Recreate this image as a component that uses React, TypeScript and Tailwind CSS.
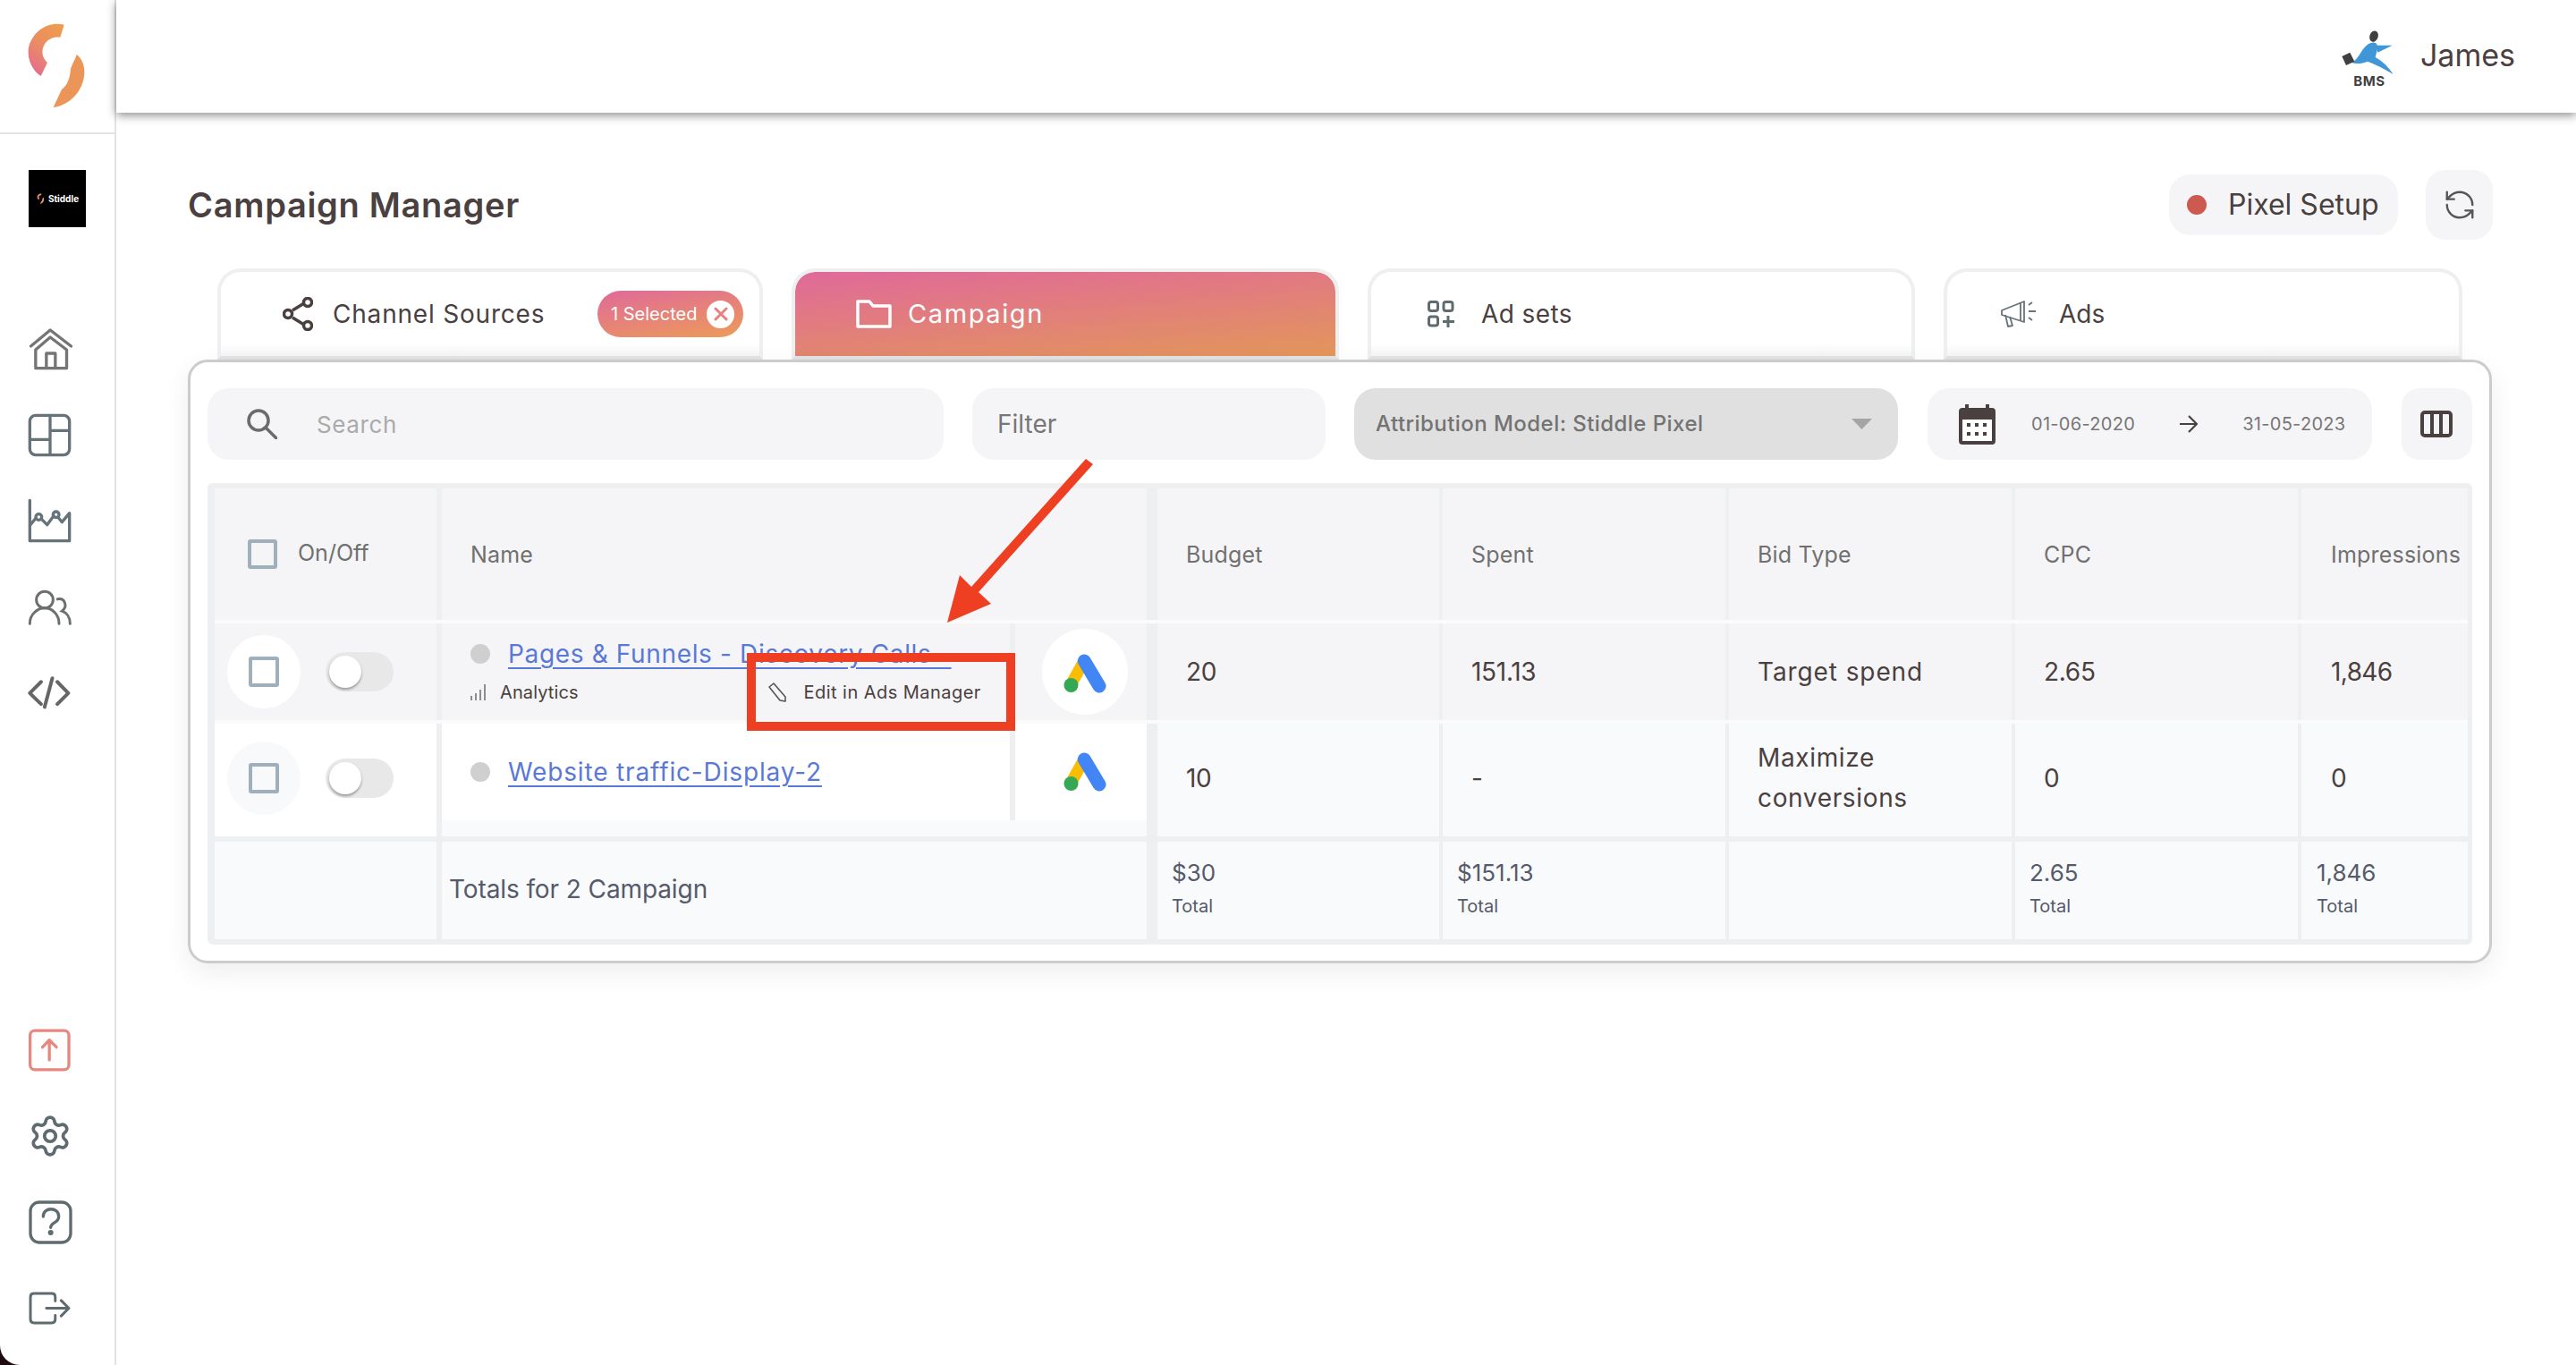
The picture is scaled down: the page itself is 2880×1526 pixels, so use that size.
import React from 'react';
import { Settings, RefreshCcw } from 'lucide-react';

const tableCols = 'grid grid-cols-[254px_800px_319px_320px_320px_320px_186px]';

function StiddleMark({ className }: { className: string }) {
  return (
    <svg viewBox="0 0 270 345" className={className}>
      <defs>
        <linearGradient id="logoTop" x1="0.2" y1="1" x2="0.7" y2="0">
          <stop offset="0" stopColor="#e56b8f" />
          <stop offset="0.55" stopColor="#ea8d62" />
          <stop offset="1" stopColor="#ee9b50" />
        </linearGradient>
      </defs>
      <path fill="url(#logoTop)" d="M158 38C110 25 50 55 38 120C35 160 55 195 80 210L102 165C85 150 78 125 95 100C108 82 130 78 145 80Z" />
      <path fill="#ec9558" d="M200 138C235 165 235 225 200 270C180 295 150 312 122 315L150 255C170 240 178 215 180 185C185 170 195 155 200 138Z" />
    </svg>
  );
}

function HomeIcon() {
  return (
    <svg viewBox="30 30 155 150" className="w-[52px] h-[50px]" fill="none" stroke="#757575" strokeWidth="10" strokeLinejoin="round" strokeLinecap="round">
      <path d="M40 96L105 42L175 96" />
      <path d="M56 108V170H160V108L105 66Z" />
      <path d="M92 168V120H122V168" />
    </svg>
  );
}

function GridIcon() {
  return (
    <svg viewBox="35 320 147 147" className="w-[49px] h-[49px]" fill="none" stroke="#66737a" strokeWidth="10">
      <rect x="42" y="327" width="133" height="133" rx="20" />
      <path d="M110 327V460M110 378H175M42 408H110" />
    </svg>
  );
}

function ChartIcon() {
  return (
    <svg viewBox="35 605 147 150" className="w-[49px] h-[50px]" fill="none" stroke="#66737a" strokeWidth="10" strokeLinejoin="round" strokeLinecap="round">
      <path d="M42 612V748H175V655L150 685L136 668M122 664L100 694L82 676M62 672L42 696" />
      <circle cx="72" cy="668" r="10" />
      <circle cx="130" cy="660" r="10" />
    </svg>
  );
}

function UsersIcon() {
  return (
    <svg viewBox="35 905 147 122" className="w-[49px] h-[41px]" fill="none" stroke="#6b6f70" strokeWidth="9" strokeLinecap="round">
      <circle cx="92" cy="942" r="28" />
      <path d="M42 1022C42 990 68 970 92 970C116 970 140 990 140 1022" />
      <path d="M135 940C160 935 170 965 150 980C165 985 177 1000 177 1022" />
    </svg>
  );
}

function CodeIcon() {
  return (
    <svg viewBox="35 1202 145 110" className="w-[48px] h-[37px]" fill="none" stroke="#666" strokeWidth="12" strokeLinecap="round" strokeLinejoin="round">
      <path d="M80 1220L42 1258L80 1295M135 1220L172 1258L135 1295M118 1208L92 1305" />
    </svg>
  );
}

function UploadIcon() {
  return (
    <svg viewBox="98 150 142 144" className="w-[47px] h-[48px]" fill="none" stroke="#e8877f" strokeWidth="10" strokeLinecap="round" strokeLinejoin="round">
      <rect x="103" y="156" width="131" height="132" rx="16" />
      <path d="M168 255V190M145 212L168 188L192 212" />
    </svg>
  );
}

function QuestionIcon() {
  return (
    <svg viewBox="94 724 147 147" className="w-[49px] h-[49px]" fill="none" stroke="#5f6b6e" strokeWidth="10" strokeLinecap="round">
      <rect x="100" y="730" width="135" height="135" rx="30" />
      <path d="M143 778C143 745 195 745 195 778C195 802 168 795 168 815" />
      <circle cx="168" cy="832" r="4" fill="#5f6b6e" />
    </svg>
  );
}

function LogoutIcon() {
  return (
    <svg viewBox="98 1030 142 112" className="w-[47px] h-[37px]" fill="none" stroke="#5f6b6e" strokeWidth="9" strokeLinecap="round" strokeLinejoin="round">
      <path d="M188 1062V1048Q188 1036 176 1036H116Q104 1036 104 1048V1124Q104 1136 116 1136H176Q188 1136 188 1124V1110" />
      <path d="M158 1086H232M208 1060L234 1086L208 1112" />
    </svg>
  );
}

function AdsLogo() {
  return (
    <svg viewBox="0 0 48 44" className="w-[48px] h-[44px]" fill="none" strokeLinecap="round">
      <path d="M8 35L23 8" stroke="#fbbc04" strokeWidth="13" />
      <path d="M23.3 8L40 36" stroke="#4285f4" strokeWidth="15" />
      <circle cx="8.5" cy="35" r="8" fill="#34a853" />
    </svg>
  );
}

function Checkbox({ small }: { small?: boolean }) {
  return <div className={small ? 'w-[33px] h-[33px] border-[4px] border-[#9fb0bc] rounded-[3px]' : 'w-[34px] h-[34px] border-[4px] border-[#9fb0bc] rounded-[3px]'} />;
}

function Toggle() {
  return (
    <div className="w-[76px] h-[44px] rounded-full bg-[#e8e8e8] flex items-center pl-[4px]">
      <div className="w-[36px] h-[36px] rounded-full bg-white shadow-[0_2px_3px_rgba(0,0,0,0.35)]" />
    </div>
  );
}

function HeaderCell({ label }: { label: string }) {
  return (
    <div className="bg-[#f5f5f7] border-r-[4px] border-[#eeeff1] pl-[32px] pt-[57px] text-[25px] tracking-[0.2px] leading-[34px] text-[#707070] whitespace-nowrap overflow-visible">
      {label}
    </div>
  );
}

function DataCell({ children, row }: { children: React.ReactNode; row: 1 | 2 }) {
  return (
    <div className={row === 1
      ? 'bg-[#f5f5f7] border-r-[4px] border-[#eeeff1] pl-[32px] flex items-center text-[28px] tracking-[-0.3px] leading-[45px] text-[#4a4040]'
      : 'bg-[#f9fafc] border-r-[4px] border-[#eeeff1] pl-[32px] pb-[4px] flex items-center text-[28px] tracking-[-0.3px] leading-[45px] text-[#4a4040]'}>
      <div>{children}</div>
    </div>
  );
}

function TotalCell({ value }: { value?: string }) {
  return (
    <div className="bg-[#f9fafc] border-r-[4px] border-[#eeeff1] pl-[16px] pt-[18px] text-[#555b6b]">
      {value && (
        <>
          <div className="text-[26px] leading-[34px]">{value}</div>
          <div className="text-[20px] leading-[30px] mt-[5px]">Total</div>
        </>
      )}
    </div>
  );
}

export default function App() {
  return (
    <div className="relative w-[2880px] h-[1526px] bg-[#1d0b10] overflow-hidden font-['Inter',sans-serif]">
      <div className="flex w-full h-full bg-white rounded-bl-[22px] overflow-hidden">
        {/* sidebar */}
        <aside className="w-[130px] shrink-0 border-r-2 border-[#e3e3e3] flex flex-col">
          <div className="h-[150px] border-b-2 border-[#e3e3e3] flex items-center justify-center pb-[4px]">
            <StiddleMark className="w-[90px] h-[115px]" />
          </div>
          <div className="mt-[40px] ml-[32px] w-[64px] h-[64px] bg-black flex items-center justify-center gap-[3px]">
            <StiddleMark className="w-[11px] h-[14px]" />
            <span className="text-[10px] font-bold text-white leading-none">Stiddle</span>
          </div>
          <nav className="mt-[88px] pl-[31px] flex flex-col">
            <div className="h-[96px] flex items-center"><HomeIcon /></div>
            <div className="h-[96px] flex items-center"><GridIcon /></div>
            <div className="h-[96px] flex items-center"><ChartIcon /></div>
            <div className="h-[96px] flex items-center"><UsersIcon /></div>
            <div className="h-[96px] flex items-center"><CodeIcon /></div>
          </nav>
          <div className="mt-auto mb-[16px] pl-[32px] flex flex-col">
            <div className="h-[96px] flex items-center"><UploadIcon /></div>
            <div className="h-[96px] flex items-center"><Settings size={50} strokeWidth={1.8} color="#5f6b6e" className="-ml-[1px]" /></div>
            <div className="h-[96px] flex items-center"><QuestionIcon /></div>
            <div className="h-[96px] flex items-center"><LogoutIcon /></div>
          </div>
        </aside>

        <main className="flex-1 min-w-0">
          <header className="h-[126px] bg-white shadow-[0_3px_10px_rgba(0,0,0,0.45)] flex items-center justify-end pr-[68px]">
            <div className="flex flex-col items-center mr-[15px] -ml-[2px] pr-[2px]">
              <svg viewBox="0 0 240 165" className="w-[80px] h-[55px]">
                <ellipse cx="135" cy="38" rx="14" ry="19" transform="rotate(20 135 38)" fill="#3f3f3f" />
                <path fill="#3f97d8" d="M60 125C88 116 92 72 125 60C140 54 152 64 146 84L140 108C165 122 185 142 200 165C170 146 140 132 114 122C95 130 75 132 60 125Z" />
                <path fill="#3f97d8" d="M142 68L197 68L148 92Z" />
                <path fill="#3f3f3f" d="M28 105L55 92L70 122L42 135Z" />
              </svg>
              <span className="text-[15px] font-bold leading-[16px] text-[#3f3f3f] tracking-[0.5px]">BMS</span>
            </div>
            <span className="text-[34px] text-[#4a4040] pb-[4px]">James</span>
          </header>

          <div className="pl-[80px] pr-[94px]">
            <div className="mt-[64px] h-[78px] flex items-center justify-between">
              <h1 className="text-[38px] tracking-[0.7px] font-semibold text-[#4a4040]">Campaign Manager</h1>
              <div className="flex items-center gap-[31px] -mr-[1px]">
                <div className="w-[256px] h-[68px] rounded-[24px] bg-[#f5f5f7] flex items-center pl-[20px]">
                  <div className="w-[22px] h-[22px] rounded-full bg-[#cc5a50]" />
                  <span className="ml-[24px] text-[32px] text-[#4a4040]">Pixel Setup</span>
                </div>
                <div className="w-[75px] h-[78px] rounded-[22px] bg-[#f5f5f7] flex items-center justify-center">
                  <RefreshCcw size={38} strokeWidth={1.5} color="#555" />
                </div>
              </div>
            </div>

            {/* tabs */}
            <div className="mt-[32px] pl-[33px] flex gap-[32px] h-[102px]">
              <div className="w-[610px] rounded-t-[26px] border-[4px] border-[#eeeff1] border-b-[#e2e3e6] bg-[linear-gradient(to_bottom,#ffffff_85%,#f5f5f6_100%)] flex items-center relative">
                <svg viewBox="0 0 34 38" className="ml-[69px] w-[34px] h-[38px]" fill="none" stroke="#4a4040" strokeWidth="3.5">
                  <path d="M11 15L24 7M11 23L24 31" />
                  <circle cx="6" cy="19" r="4.5" />
                  <circle cx="28" cy="6" r="4.5" />
                  <circle cx="28" cy="32" r="4.5" />
                </svg>
                <span className="ml-[22px] text-[28px] tracking-[0.8px] text-[#4a4040] whitespace-nowrap">Channel Sources</span>
                <div className="absolute left-[421px] top-[21px] w-[163px] h-[52px] rounded-full bg-[linear-gradient(170deg,#e0699a,#ec9c58)] flex items-center pl-[15px] text-[20px] text-white">
                  <span>1 Selected</span>
                  <span className="absolute right-[10px] w-[31px] h-[31px] rounded-full bg-white flex items-center justify-center">
                    <svg viewBox="0 0 16 16" className="w-[16px] h-[16px]" stroke="#e8807f" strokeWidth="3" strokeLinecap="round"><path d="M2 2L14 14M14 2L2 14" /></svg>
                  </span>
                </div>
              </div>
              <div className="w-[612px] rounded-t-[26px] border-[4px] border-[#eeeff1] border-b-[#e2e3e6] bg-clip-padding bg-[linear-gradient(175deg,#e0699a,#e3965a)] flex items-center">
                <svg viewBox="0 0 40 32" className="ml-[68px] w-[40px] h-[32px]" fill="none" stroke="#fff" strokeWidth="3.5" strokeLinejoin="round">
                  <path d="M2 2H15L19 7H38V30H2Z" />
                </svg>
                <span className="ml-[18px] text-[29px] tracking-[1.6px] text-white">Campaign</span>
              </div>
              <div className="w-[612px] rounded-t-[26px] border-[4px] border-[#eeeff1] border-b-[#e2e3e6] bg-[linear-gradient(to_bottom,#ffffff_85%,#f5f5f6_100%)] flex items-center">
                <svg viewBox="0 0 30 30" className="ml-[63px] w-[30px] h-[30px]" fill="none" stroke="#5f6b6e" strokeWidth="3">
                  <rect x="1.5" y="1.5" width="10" height="10" rx="2.5" />
                  <rect x="18" y="1.5" width="10" height="10" rx="2.5" />
                  <rect x="1.5" y="18" width="10" height="10" rx="2.5" />
                  <path d="M23 17V30M17 23.5H30" />
                </svg>
                <span className="ml-[30px] text-[28px] tracking-[0.4px] text-[#4a4040]">Ad sets</span>
              </div>
              <div className="w-[580px] rounded-t-[26px] border-[4px] border-[#eeeff1] border-b-[#e2e3e6] bg-[linear-gradient(to_bottom,#ffffff_85%,#f5f5f6_100%)] flex items-center">
                <svg viewBox="0 0 40 30" className="ml-[60px] w-[40px] h-[30px]" fill="none" stroke="#66737a" strokeWidth="1.8" strokeLinejoin="round">
                  <path d="M1 11L26 1V24L1 16Z" />
                  <path d="M22 3V22M5 16L8 29L13 28L10 18" />
                  <path d="M31 5L35 2M31 12H39M31 19L35 22" />
                </svg>
                <span className="ml-[25px] text-[28px] text-[#4a4040]">Ads</span>
              </div>
            </div>

            {/* card */}
            <section className="h-[675px] rounded-[22px] border-[3px] border-[#cccccc] bg-white shadow-[0_10px_30px_rgba(0,0,0,0.07)] pt-[29px] pl-[19px] pr-[19px] relative">
              <div className="flex h-[80px]">
                <div className="w-[823px] rounded-[24px] bg-[#f5f5f7] flex items-center pl-[44px]">
                  <svg viewBox="0 0 34 34" className="w-[34px] h-[34px]" fill="none" stroke="#6b6b6b" strokeWidth="3.5" strokeLinecap="round">
                    <circle cx="13" cy="13" r="11" />
                    <path d="M21 21L33 33" />
                  </svg>
                  <span className="ml-[44px] text-[26px] tracking-[0.6px] text-[#aaaaaa]">Search</span>
                </div>
                <div className="ml-[32px] w-[395px] rounded-[24px] bg-[#f5f5f7] flex items-center pl-[28px] text-[28px] text-[#777777]">Filter</div>
                <div className="ml-[32px] w-[608px] rounded-[24px] bg-[#e0e0e0] flex items-center justify-between pl-[24px] pr-[29px]">
                  <span className="text-[24px] tracking-[0.45px] font-medium text-[#737373]">Attribution Model: Stiddle Pixel</span>
                  <svg viewBox="0 0 23 12" className="w-[23px] h-[12px]"><path d="M0 0H23L11.5 12Z" fill="#a5a5a5" /></svg>
                </div>
                <div className="ml-[33px] w-[497px] rounded-[24px] bg-[#f5f5f7] flex items-center pl-[35px] text-[20px] tracking-[0.3px] text-[#777777]">
                  <svg viewBox="0 0 41 45" className="w-[41px] h-[45px]">
                    <path d="M7 0H11V4H30V0H34V4H37Q41 4 41 8V41Q41 45 37 45H4Q0 45 0 41V8Q0 4 4 4H7Z" fill="#4a4040" />
                    <rect x="4" y="17" width="33" height="24" fill="#fff" />
                    <path d="M9 21h4v4H9zM18 21h4v4h-4zM27 21h4v4h-4zM9 31h4v4H9zM18 31h4v4h-4zM27 31h4v4h-4z" fill="#4a4040" />
                  </svg>
                  <span className="ml-[40px]">01-06-2020</span>
                  <svg viewBox="0 0 20 22" className="ml-[50px] w-[20px] h-[22px]" fill="none" stroke="#4a4040" strokeWidth="2.2"><path d="M0 11H19M10 2L19 11L10 20" /></svg>
                  <span className="ml-[50px]">31-05-2023</span>
                </div>
                <div className="ml-[33px] w-[79px] rounded-[20px] bg-[#f5f5f7] flex items-center justify-center pr-[2px]">
                  <svg viewBox="0 0 36 30" className="w-[36px] h-[30px]" fill="none" stroke="#4a4040" strokeWidth="4">
                    <rect x="2" y="2" width="32" height="26" rx="3" />
                    <path d="M13 2V28M23 2V28" />
                  </svg>
                </div>
              </div>

              {/* table */}
              <div className="mt-[26px] h-[516px] w-[2532px] bg-[#eeeff1] rounded-[6px] p-[6px] pl-[8px] pr-[5px]">
                <div className="bg-[#fbfbfc] flex flex-col gap-[4px] h-[389px]">
                  <div className={`${tableCols} h-[147px]`}>
                    <div className="bg-[#f5f5f7] border-r-[6px] border-[#eeeff1] flex items-center pl-[37px]">
                      <Checkbox small />
                      <span className="ml-[23px] text-[25px] text-[#707070] pb-[2px]">On/Off</span>
                    </div>
                    <div className="bg-[#f5f5f7] border-r-[12px] border-[#eeeff1] pl-[32px] pt-[57px] text-[25px] tracking-[0.2px] leading-[34px] text-[#707070]">Name</div>
                    <HeaderCell label="Budget" />
                    <HeaderCell label="Spent" />
                    <HeaderCell label="Bid Type" />
                    <HeaderCell label="CPC" />
                    <div className="bg-[#f5f5f7] pl-[33px] pt-[57px] text-[25px] tracking-[0.2px] leading-[34px] text-[#707070] whitespace-nowrap">Impressions</div>
                  </div>

                  <div className={`${tableCols} h-[108px]`}>
                    <div className="bg-[#f5f5f7] border-r-[6px] border-[#eeeff1] flex items-center pl-[14px]">
                      <div className="w-[82px] h-[82px] rounded-full bg-white flex items-center justify-center">
                        <Checkbox />
                      </div>
                      <div className="ml-[28px]"><Toggle /></div>
                    </div>
                    <div className="border-r-[12px] border-[#eeeff1] flex">
                      <div className="w-[641px] bg-[#f5f5f7] pl-[32px] pt-[16px] border-r-[6px] border-[#eeeff1]">
                        <div className="flex items-center h-[36px]">
                          <div className="w-[22px] h-[22px] rounded-full shrink-0 bg-[#cfcfcf]" />
                          <a className="ml-[20px] text-[28px] tracking-[0.65px] text-[#5a78d8] underline underline-offset-[5px] whitespace-nowrap">Pages &amp; Funnels - Discovery Calls -</a>
                          <span className="ml-[6px] text-[22px] text-[#5a78d8]">...</span>
                        </div>
                        <div className="flex items-center h-[26px] mt-[12px] text-[20px] text-[#4a4040]">
                          <svg viewBox="0 0 18 18" className="w-[18px] h-[18px]" fill="#8d8d8d">
                            <path d="M0 13h2v5H0zM5 10h2v8H5zM10 6h2v12h-2zM15 0h2v18h-2z" />
                          </svg>
                          <span className="ml-[15px] tracking-[0.1px]">Analytics</span>
                          <svg viewBox="0 0 22 24" className="ml-[211px] w-[22px] h-[24px]" fill="none" stroke="#555" strokeWidth="1.6" strokeLinejoin="round">
                            <path d="M2 6L7 2L20 17L20 22L14 21Z" />
                          </svg>
                          <span className="ml-[19px] tracking-[0.45px] whitespace-nowrap">Edit in Ads Manager</span>
                        </div>
                      </div>
                      <div className="flex-1 bg-[#f5f5f7] flex items-center justify-center pl-[8px]">
                        <div className="w-[96px] h-[96px] rounded-full bg-white flex items-center justify-center pt-[4px]">
                          <AdsLogo />
                        </div>
                      </div>
                    </div>
                    <DataCell row={1}>20</DataCell>
                    <DataCell row={1}>151.13</DataCell>
                    <DataCell row={1}><span className="tracking-[0.9px]">Target spend</span></DataCell>
                    <DataCell row={1}>2.65</DataCell>
                    <div className="bg-[#f5f5f7] pl-[33px] flex items-center text-[28px] tracking-[-0.6px] text-[#4a4040]">1,846</div>
                  </div>

                  <div className={`${tableCols} h-[126px]`}>
                    <div className="bg-white border-r-[6px] border-[#eeeff1] flex items-start pt-[20px] pl-[14px]">
                      <div className="w-[82px] h-[82px] rounded-full bg-[#f8f9fb] flex items-center justify-center">
                        <Checkbox />
                      </div>
                      <div className="ml-[28px] mt-[19px]"><Toggle /></div>
                    </div>
                    <div className="border-r-[12px] border-[#eeeff1] bg-[#f9fafc]">
                      <div className="flex h-[108px]">
                        <div className="w-[641px] bg-white pl-[32px] border-r-[6px] border-[#eeeff1] flex items-center">
                          <div className="w-[22px] h-[22px] rounded-full bg-[#cfcfcf]" />
                          <a className="ml-[20px] text-[28px] tracking-[0.85px] text-[#5a78d8] underline underline-offset-[5px] whitespace-nowrap">Website traffic-Display-2</a>
                        </div>
                        <div className="flex-1 bg-white flex items-center justify-center pl-[8px]">
                          <AdsLogo />
                        </div>
                      </div>
                    </div>
                    <DataCell row={2}>10</DataCell>
                    <DataCell row={2}>-</DataCell>
                    <DataCell row={2}><span className="tracking-[0.65px]">Maximize<br />conversions</span></DataCell>
                    <DataCell row={2}>0</DataCell>
                    <div className="bg-[#f9fafc] pl-[33px] pb-[4px] flex items-center text-[28px] text-[#4a4040]">0</div>
                  </div>
                </div>

                <div className={`${tableCols} mt-[6px] h-[109px]`}>
                  <div className="bg-[#f9fafc] border-r-[6px] border-[#eeeff1]" />
                  <div className="bg-[#f9fafc] border-r-[12px] border-[#eeeff1] pl-[8px] flex items-center text-[28px] tracking-[-0.1px] text-[#555b6b] pb-[4px]">Totals for 2 Campaign</div>
                  <TotalCell value="$30" />
                  <TotalCell value="$151.13" />
                  <TotalCell />
                  <TotalCell value="2.65" />
                  <div className="bg-[#f9fafc] pl-[17px] pt-[18px] text-[#555b6b]">
                    <div className="text-[26px] leading-[34px]">1,846</div>
                    <div className="text-[20px] leading-[30px] mt-[5px]">Total</div>
                  </div>
                </div>
              </div>
            </section>
          </div>
        </main>
      </div>

      {/* annotation drawn over the screenshot */}
      <svg viewBox="0 0 2880 1526" className="absolute inset-0 w-full h-full pointer-events-none">
        <rect x="840" y="735" width="290" height="77" fill="none" stroke="#ee3f23" strokeWidth="10" />
        <polygon fill="#ee3f23" points="1214,513 1222,519 1094,662 1108,675 1059,696 1073,643 1086,656" />
      </svg>
    </div>
  );
}
